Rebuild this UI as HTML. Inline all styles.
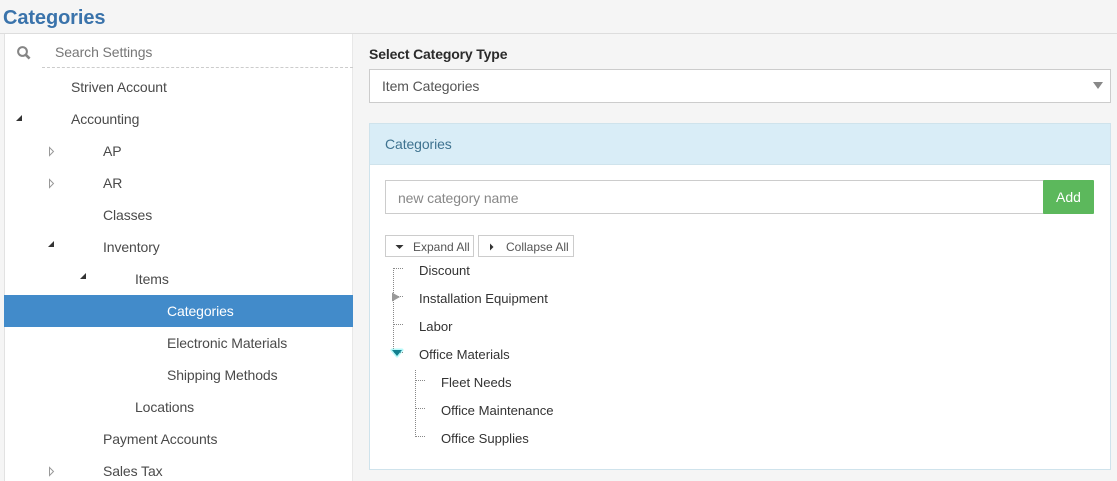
<!DOCTYPE html>
<html><head><meta charset="utf-8"><style>
html,body{margin:0;padding:0;width:1117px;height:481px;overflow:hidden;background:#f5f5f5;font-family:"Liberation Sans",sans-serif}
.a{position:absolute;white-space:nowrap}
.t{font-size:14px;color:#4a4a4a;line-height:18px;letter-spacing:-.1px}
.r{font-size:13.1px;color:#333;line-height:18px}
.box{position:absolute;box-sizing:border-box;background:#fff}
</style></head><body>
<div class="a" style="left:3px;top:5px;font-size:20px;font-weight:bold;color:#3a73ab;line-height:26px;letter-spacing:-.1px">Categories</div>
<div class="a" style="left:0;top:33px;width:1117px;height:1px;background:#ddd"></div>
<div class="box" style="left:4px;top:34px;width:349px;height:447px;border-left:1px solid #e2e2e2;border-right:1px solid #e8e8e8"></div>
<svg class="a" style="left:16px;top:45px" width="16" height="16" viewBox="0 0 16 16"><circle cx="6.500" cy="6.500" r="4.400" fill="none" stroke="#858585" stroke-width="2"/><path d="M9.800 9.800l3.800 3.800" stroke="#858585" stroke-width="2.600"/></svg>
<div class="a t" style="left:55px;top:43px;color:#777">Search Settings</div>
<div class="a" style="left:42px;top:67px;width:311px;border-top:1px dashed #ccc"></div>
<div class="a t" style="left:71px;top:78px">Striven Account</div>
<div class="a t" style="left:71px;top:110px">Accounting</div>
<div class="a t" style="left:103px;top:142px">AP</div>
<div class="a t" style="left:103px;top:174px">AR</div>
<div class="a t" style="left:103px;top:206px">Classes</div>
<div class="a t" style="left:103px;top:238px">Inventory</div>
<div class="a t" style="left:135px;top:270px">Items</div>
<div class="a" style="left:4px;top:295px;width:349px;height:32px;background:#428bca"></div>
<div class="a t" style="left:167px;top:302px;color:#fff">Categories</div>
<div class="a t" style="left:167px;top:334px">Electronic Materials</div>
<div class="a t" style="left:167px;top:366px">Shipping Methods</div>
<div class="a t" style="left:135px;top:398px">Locations</div>
<div class="a t" style="left:103px;top:430px">Payment Accounts</div>
<div class="a t" style="left:103px;top:462px">Sales Tax</div>
<svg class="a" style="left:0;top:0" width="360" height="481">
<path d="M22 115v6h-6z" fill="#333"/><path d="M54 241v6h-6z" fill="#333"/><path d="M86 273v6h-6z" fill="#333"/>
<path d="M49.500 147.500l4 4-4 4z" fill="#fff" stroke="#999"/><path d="M49.500 179.500l4 4-4 4z" fill="#fff" stroke="#999"/><path d="M49.500 467.500l4 4-4 4z" fill="#fff" stroke="#999"/>
</svg>
<div class="a" style="left:369px;top:45px;font-size:14px;font-weight:bold;color:#2b2b2b;line-height:18px;letter-spacing:-.15px">Select Category Type</div>
<div class="box" style="left:369px;top:69px;width:742px;height:34px;border:1px solid #ccc"></div>
<div class="a t" style="left:382px;top:77px;color:#555">Item Categories</div>
<svg class="a" style="left:1093px;top:81px" width="12" height="10"><path d="M0 1h10l-5 7z" fill="#888"/></svg>
<div class="box" style="left:369px;top:123px;width:742px;height:347px;border:1px solid #cfe3ec"></div>
<div class="a" style="left:369px;top:123px;width:742px;height:42px;box-sizing:border-box;background:#d9edf7;border:1px solid #cfe3ec"></div>
<div class="a t" style="left:385px;top:135px;color:#3f7390">Categories</div>
<div class="box" style="left:385px;top:180px;width:659px;height:34px;border:1px solid #ccc"></div>
<div class="a t" style="left:398px;top:189px;color:#888">new category name</div>
<div class="a" style="left:1043px;top:180px;width:51px;height:34px;background:#5cb85c;border-radius:1px;color:#fff;font-size:14px;line-height:34px;text-align:center">Add</div>
<div class="box" style="left:385px;top:235px;width:89px;height:22px;border:1px solid #ccc"></div>
<div class="box" style="left:478px;top:235px;width:96px;height:22px;border:1px solid #ccc"></div>
<svg class="a" style="left:385px;top:235px" width="190" height="22"><path d="M10.500 10h8l-4 4z" fill="#333"/><path d="M105 8.500v7l3.500-3.500z" fill="#333"/></svg>
<div class="a" style="left:413px;top:238px;font-size:12px;color:#555;line-height:18px">Expand All</div>
<div class="a" style="left:506px;top:238px;font-size:12px;color:#555;line-height:18px">Collapse All</div>
<svg class="a" style="left:385px;top:260px" width="60" height="190">
<g fill="none" stroke="#888" stroke-width="1" stroke-dasharray="1 1">
<path d="M8.500 8V90"/>
<path d="M9 8.500h10M9 36.500h10M9 64.500h10M9 92.500h10"/>
<path d="M30.500 110V177"/>
<path d="M31 120.500h10M31 148.500h10M31 176.500h10"/>
</g>
<path d="M7 32.500l8 4.500-8 4.500z" fill="#999"/>
<path d="M7 90h10l-5 6z" fill="#3ee" opacity=".35" stroke="#3ee" stroke-width="3" stroke-linejoin="round"/>
<path d="M7 90h10l-5 6z" fill="#12808f"/>
</svg>
<div class="a r" style="left:419px;top:262px">Discount</div>
<div class="a r" style="left:419px;top:290px">Installation Equipment</div>
<div class="a r" style="left:419px;top:318px">Labor</div>
<div class="a r" style="left:419px;top:346px">Office Materials</div>
<div class="a r" style="left:441px;top:374px">Fleet Needs</div>
<div class="a r" style="left:441px;top:402px">Office Maintenance</div>
<div class="a r" style="left:441px;top:430px">Office Supplies</div>
</body></html>
